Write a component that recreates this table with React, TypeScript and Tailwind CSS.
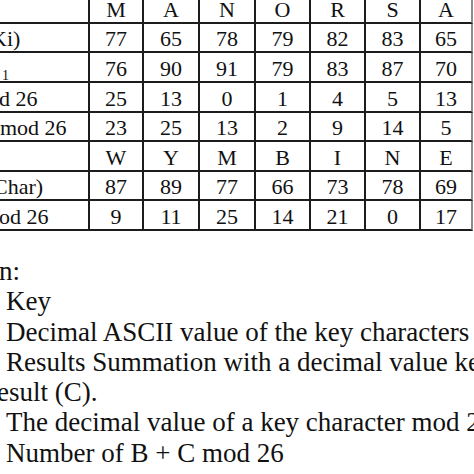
import React from "react";

const serif = { fontFamily: '"Liberation Serif", "Times New Roman", serif' };

type Row = { label: React.ReactNode; cells: string[]; h: string; top?: boolean };

const rows: Row[] = [
    { label: null, cells: ["M", "A", "N", "O", "R", "S", "A"], h: "h-[24px]", top: true },
    { label: <span className="-ml-[9px]">Ki)</span>, cells: ["77", "65", "78", "79", "82", "83", "65"], h: "h-[29px]" },
    { label: <span className="ml-[2px] text-[14px] leading-[14px] -mb-[3px]">1</span>, cells: ["76", "90", "91", "79", "83", "87", "70"], h: "h-[30px]" },
    { label: <span className="-ml-[1px]">d 26</span>, cells: ["25", "13", "0", "1", "4", "5", "13"], h: "h-[30px]" },
    { label: <span>mod 26</span>, cells: ["23", "25", "13", "2", "9", "14", "5"], h: "h-[29px]" },
    { label: null, cells: ["W", "Y", "M", "B", "I", "N", "E"], h: "h-[30px]" },
    { label: <span className="-ml-[7px]">Char)</span>, cells: ["87", "89", "77", "66", "73", "78", "69"], h: "h-[29px]" },
    { label: <span className="-ml-[1px]">od 26</span>, cells: ["9", "11", "25", "14", "21", "0", "17"], h: "h-[30px]" },
];

const colW = ["w-[54px]", "w-[56px]", "w-[56px]", "w-[55px]", "w-[55px]", "w-[55px]", "w-[52px]"];

function TableRow({ row }: { row: Row }) {
    const lead = row.top ? "leading-[20px] pb-[2px]" : "leading-[22px] pb-[1px]";
    return (
        <div className={`flex ${row.h}`}>
            <div className={`w-[90px] shrink-0 flex items-end overflow-hidden whitespace-nowrap border-r-2 border-b-2 border-[#1c1c1c] ${lead}`}>
                {row.label}
            </div>
            {row.cells.map((c, i) => (
                <div
                    key={i}
                    className={`${colW[i]} shrink-0 flex items-end justify-center border-b-2 border-r-2 ${lead} ${i === 6 ? "border-b-[#1c1c1c] border-r-[#8c8c8c]" : "border-[#1c1c1c]"}`}
                >
                    {c}
                </div>
            ))}
        </div>
    );
}

export default function App() {
    return (
        <div className="w-[474px] h-[474px] overflow-hidden bg-white text-[#111]" style={serif}>
            <div className="text-[22px]">
                {rows.map((r, i) => (
                    <TableRow key={i} row={r} />
                ))}
            </div>
            <div className="mt-[25px] text-[27px] leading-[30.3px] whitespace-nowrap">
                <div className="-ml-[1px]">n:</div>
                <div className="pl-[6px]">Key</div>
                <div className="pl-[6px]">Decimal ASCII value of the key characters</div>
                <div className="pl-[6px]">Results Summation with a decimal value key characters</div>
                <div className="-ml-[21px]">Result (C).</div>
                <div className="pl-[6px]">The decimal value of a key character mod 26</div>
                <div className="pl-[6px]">Number of B + C mod 26</div>
            </div>
        </div>
    );
}
